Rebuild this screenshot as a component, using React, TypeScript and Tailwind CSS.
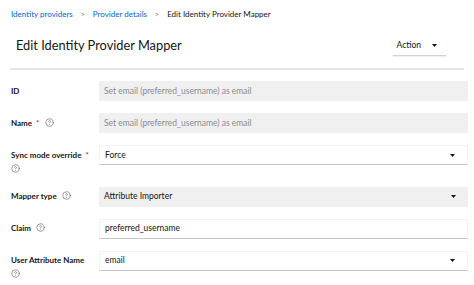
import { CircleHelp } from "lucide-react";

type Field = {
  label: string;
  required?: boolean;
  help?: boolean;
  helpBelow?: boolean;
  value: string;
  kind: "disabled" | "text" | "select" | "disabledSelect";
};

const fields: Field[] = [
  { label: "ID", value: "Set email (preferred_username) as email", kind: "disabled" },
  { label: "Name", required: true, help: true, value: "Set email (preferred_username) as email", kind: "disabled" },
  { label: "Sync mode override", required: true, help: true, helpBelow: true, value: "Force", kind: "select" },
  { label: "Mapper type", help: true, value: "Attribute Importer", kind: "disabledSelect" },
  { label: "Claim", help: true, value: "preferred_username", kind: "text" },
  { label: "User Attribute Name", help: true, helpBelow: true, value: "email", kind: "select" },
];

const Caret = () => (
  <svg width="5" height="3" viewBox="0 0 5 3" className="shrink-0">
    <path d="M0 0h5L2.5 3z" fill="#151515" />
  </svg>
);

const Help = () => <CircleHelp className="h-[9px] w-[9px] text-[#6a6e73]" strokeWidth={1.8} />;

const App = () => {
  return (
    <div className="w-[474px] h-[285px] overflow-hidden bg-white font-['Lato',sans-serif] text-[#151515]">
      {/* Breadcrumb */}
      <nav className="flex items-center h-[28px] pl-[11px] text-[8px]">
        <span className="text-[#0066cc]">Identity providers</span>
        <span className="mx-[8px] text-[#6a6e73] text-[7px]">&gt;</span>
        <span className="text-[#0066cc]">Provider details</span>
        <span className="mx-[8px] text-[#6a6e73] text-[7px]">&gt;</span>
        <span>Edit Identity Provider Mapper</span>
      </nav>

      {/* Header */}
      <div className="flex items-center justify-between h-[42px] pb-[4px] pl-[6px] pr-[18px] mx-[10px] border-b-2 border-[#e6e6e6]">
        <h1 className="text-[12.8px]">Edit Identity Provider Mapper</h1>
        <button className="flex items-center gap-[11px] h-[20px] pl-[4px] pr-[9px] text-[8.5px] text-[#151515] border-b border-[#d2d2d2] shadow-[0_1px_1px_rgba(0,0,0,0.06)]">
          Action
          <Caret />
        </button>
      </div>

      {/* Form */}
      <div className="grid grid-cols-[88px_1fr] gap-y-[12px] pl-[11px] pr-[6px] pt-[11px]">
        {fields.map((f) => (
          <div key={f.label} className="contents">
            <div className="pt-[3.5px] text-[8px] font-bold leading-[13px]">
              <span>{f.label}</span>
              {f.required && <span className="ml-[4px] font-normal text-[#c9190b]">*</span>}
              {f.help && !f.helpBelow && (
                <span className="inline-flex ml-[5px] align-[-1px]">
                  <Help />
                </span>
              )}
              {f.helpBelow && (
                <div className="flex items-center h-[13px]">
                  <Help />
                </div>
              )}
            </div>
            <div
              className={
                "flex items-center justify-between h-[20px] pl-[5px] pr-[12px] text-[8.5px] " +
                (f.kind === "disabled" || f.kind === "disabledSelect"
                  ? "bg-[#f0f0f0] " + (f.kind === "disabled" ? "text-[#8a8d90]" : "text-[#151515]")
                  : "bg-white border border-[#f3f3f3] border-b-[#c7c7c7]")
              }
            >
              <span>{f.value}</span>
              {(f.kind === "select" || f.kind === "disabledSelect") && <Caret />}
            </div>
          </div>
        ))}
      </div>
    </div>
  );
};

export default App;
